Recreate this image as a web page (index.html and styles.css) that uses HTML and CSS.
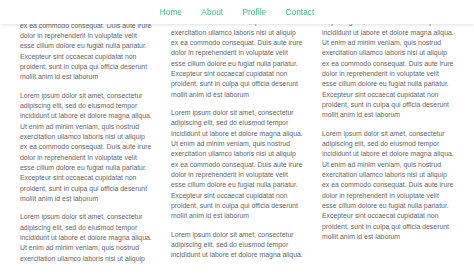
FILE: index.html
```html
<!DOCTYPE html>
<html lang="en">
<head>
    <meta charset="UTF-8">
    <meta name="viewport" content="width=device-width, initial-scale=1.0">
    <title>Columns</title>
    <link rel="stylesheet" href="styles.css">
</head>
<body>
    <header class="top-bar">
        <nav class="nav">
            <a href="#" class="nav-link">Home</a>
            <a href="#" class="nav-link">About</a>
            <a href="#" class="nav-link">Profile</a>
            <a href="#" class="nav-link">Contact</a>
        </nav>
    </header>

    <main class="content">
        <div class="column first">
            <p>ex ea commodo consequat. Duis aute irure dolor in reprehenderit in voluptate velit esse cillum dolore eu fugiat nulla pariatur. Excepteur sint occaecat cupidatat non proident, sunt in culpa qui officia deserunt mollit anim id est laborum</p>
            <p>Lorem ipsum dolor sit amet, consectetur adipiscing elit, sed do eiusmod tempor incididunt ut labore et dolore magna aliqua. Ut enim ad minim veniam, quis nostrud exercitation ullamco laboris nisi ut aliquip ex ea commodo consequat. Duis aute irure dolor in reprehenderit in voluptate velit esse cillum dolore eu fugiat nulla pariatur. Excepteur sint occaecat cupidatat non proident, sunt in culpa qui officia deserunt mollit anim id est laborum</p>
            <p>Lorem ipsum dolor sit amet, consectetur adipiscing elit, sed do eiusmod tempor incididunt ut labore et dolore magna aliqua. Ut enim ad minim veniam, quis nostrud exercitation ullamco laboris nisi ut aliquip</p>
        </div>
        <div class="column">
            <p>Ut enim ad minim veniam, quis nostrud exercitation ullamco laboris nisi ut aliquip ex ea commodo consequat. Duis aute irure dolor in reprehenderit in voluptate velit esse cillum dolore eu fugiat nulla pariatur. Excepteur sint occaecat cupidatat non proident, sunt in culpa qui officia deserunt mollit anim id est laborum</p>
            <p>Lorem ipsum dolor sit amet, consectetur adipiscing elit, sed do eiusmod tempor incididunt ut labore et dolore magna aliqua. Ut enim ad minim veniam, quis nostrud exercitation ullamco laboris nisi ut aliquip ex ea commodo consequat. Duis aute irure dolor in reprehenderit in voluptate velit esse cillum dolore eu fugiat nulla pariatur. Excepteur sint occaecat cupidatat non proident, sunt in culpa qui officia deserunt mollit anim id est laborum</p>
            <p>Lorem ipsum dolor sit amet, consectetur adipiscing elit, sed do eiusmod tempor incididunt ut labore et dolore magna aliqua.</p>
        </div>
        <div class="column">
            <p>adipiscing elit, sed do eiusmod tempor incididunt ut labore et dolore magna aliqua. Ut enim ad minim veniam, quis nostrud exercitation ullamco laboris nisi ut aliquip ex ea commodo consequat. Duis aute irure dolor in reprehenderit in voluptate velit esse cillum dolore eu fugiat nulla pariatur. Excepteur sint occaecat cupidatat non proident, sunt in culpa qui officia deserunt mollit anim id est laborum</p>
            <p>Lorem ipsum dolor sit amet, consectetur adipiscing elit, sed do eiusmod tempor incididunt ut labore et dolore magna aliqua. Ut enim ad minim veniam, quis nostrud exercitation ullamco laboris nisi ut aliquip ex ea commodo consequat. Duis aute irure dolor in reprehenderit in voluptate velit esse cillum dolore eu fugiat nulla pariatur. Excepteur sint occaecat cupidatat non proident, sunt in culpa qui officia deserunt mollit anim id est laborum</p>
        </div>
    </main>
</body>
</html>
```

FILE: styles.css
```css
html, body {
    height: 100%;
    overflow: hidden;
}

body {
    margin: 0;
    font-family: 'Liberation Sans', Arial, sans-serif;
    background-color: #fff;
    color: #666;
}

.top-bar {
    position: fixed;
    top: 0;
    left: 0;
    right: 0;
    height: 24px;
    background-color: #fff;
    box-shadow: 0 1px 3px rgba(0, 0, 0, 0.12);
    z-index: 10;
}

.nav {
    display: flex;
    justify-content: center;
    align-items: center;
    height: 100%;
    gap: 19.3px;
}

.nav-link {
    font-size: 8.37px;
    color: #42b983;
    text-decoration: none;
}

.content {
    display: grid;
    grid-template-columns: repeat(3, 132.7px);
    column-gap: 18.3px;
    align-items: start;
    padding: 17.2px 0 0 20px;
    font-size: 6.9px;
    line-height: 10.34px;
}

.column.first {
    margin-top: 3.5px;
}

.column p {
    margin: 0 0 7.9px;
}
```
